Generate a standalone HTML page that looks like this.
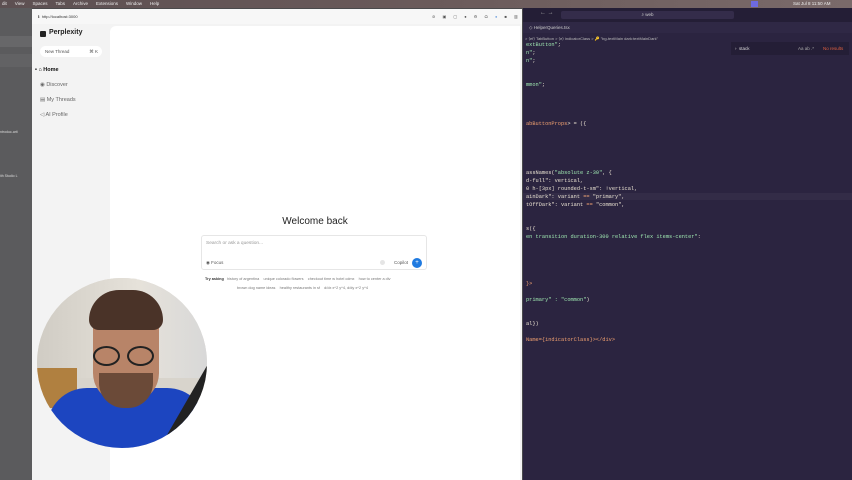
<!DOCTYPE html>
<html><head><meta charset="utf-8"><style>
*{margin:0;padding:0;box-sizing:border-box}
body{width:852px;height:480px;overflow:hidden;position:relative;font-family:"Liberation Sans",sans-serif;background:#4a4a4c}
.abs{position:absolute}
.menubar{left:0;top:0;width:852px;height:8px;background:linear-gradient(90deg,#5d5052,#6a5a5a 50%,#7a6a6a);color:#eee;font-size:4.5px;line-height:8px}
.menubar span{margin-right:8px}
.leftdark{left:0;top:8px;width:32px;height:472px;background:#5b5b5d}
.browser{left:32px;top:9px;width:490px;height:471px;background:#f3f3f3}
.urlbar{left:32px;top:9px;width:490px;height:15px;background:#f7f7f7;font-size:4px;color:#333;line-height:15px;padding-left:6px}
.main{left:110px;top:26px;width:410px;height:454px;background:#fff;border-radius:6px 0 0 0}
.side{font-size:5.5px;color:#666}
.editor{left:523px;top:8px;width:329px;height:472px;background:#2b2440}
.code{font-family:"Liberation Mono",monospace;font-size:5.3px;color:#e8e0d0;white-space:pre;left:526px}
.g{color:#9ee6b0}.o{color:#f0a070}
</style></head><body>
<div class="abs menubar"><span style="margin-left:2px">dit</span><span>View</span><span>Spaces</span><span>Tabs</span><span>Archive</span><span>Extensions</span><span>Window</span><span>Help</span>
<span style="position:absolute;left:793px">Sat Jul 8 11:50 AM</span>
<span style="position:absolute;left:751px;top:1px;width:7px;height:6px;background:#6d6ae0"></span></div>
<div class="abs leftdark"></div>
<div class="abs" style="left:0;top:36px;width:32px;height:11px;background:#676769"></div>
<div class="abs" style="left:0;top:54px;width:32px;height:13px;background:#626264"></div>
<div class="abs" style="left:0;top:130px;font-size:3.5px;color:#ddd">ntroduc-arti</div>
<div class="abs" style="left:0;top:174px;font-size:3.5px;color:#ddd">ith Studio L</div>
<div class="abs browser"></div>
<div class="abs urlbar">ℹ&nbsp; http://localhost:3000<span style="position:absolute;left:400px;color:#555;letter-spacing:3px">⊘ ▣ ▢ ● ⚙ ⬭ <span style="color:#7aa7e0">●</span> ■ ▥</span></div>
<div class="abs" style="left:40px;top:31px;width:6px;height:6px;background:#222;border-radius:1px"></div>
<div class="abs" style="left:49px;top:29px;font-size:7px;color:#222;font-weight:bold">Perplexity</div>
<div class="abs" style="left:40px;top:46px;width:62px;height:11px;background:#fff;border-radius:6px;font-size:4.5px;color:#555;line-height:11px;padding-left:5px">New Thread<span style="position:absolute;right:4px">⌘ K</span></div>
<div class="abs side" style="left:35px;top:67px;color:#111;font-weight:bold">• ⌂ Home</div>
<div class="abs side" style="left:40px;top:82px">◉ Discover</div>
<div class="abs side" style="left:40px;top:97px">▤ My Threads</div>
<div class="abs side" style="left:40px;top:112px">◁ AI Profile</div>
<div class="abs main"></div>
<div class="abs" style="left:110px;top:216px;width:410px;text-align:center;font-size:10px;color:#222">Welcome back</div>
<div class="abs" style="left:201px;top:235px;width:226px;height:35px;border:1px solid #e6e6e6;border-radius:3px;background:#fff"></div>
<div class="abs" style="left:206px;top:241px;font-size:4.8px;color:#999">Search or ask a question...</div>
<div class="abs" style="left:206px;top:260px;font-size:4.5px;color:#555">◉ Focus</div>
<div class="abs" style="left:380px;top:260px;width:5px;height:5px;border-radius:50%;background:#e5e5e5"></div>
<div class="abs" style="left:394px;top:260px;font-size:4.5px;color:#555">Copilot</div>
<div class="abs" style="left:412px;top:258px;width:10px;height:10px;border-radius:50%;background:#1f7ae0;color:#fff;font-size:6px;text-align:center;line-height:10px">+</div>
<div class="abs" style="left:205px;top:277px;font-size:3.8px;color:#777;white-space:nowrap"><b style="color:#333">Try asking</b>&nbsp;&nbsp; history of argentina &nbsp;&nbsp; unique colorado flowers &nbsp;&nbsp; checkout time w hotel cdmx &nbsp;&nbsp; how to center a div</div>
<div class="abs" style="left:237px;top:286px;font-size:3.8px;color:#777;white-space:nowrap">brown dog name ideas &nbsp;&nbsp; healthy restaurants in sf &nbsp;&nbsp; d/dx x^2 y^4, d/dy x^2 y^4</div>
<div class="abs" style="left:37px;top:278px;width:170px;height:170px;border-radius:50%;overflow:hidden;background:#d8d4cc">
 <div class="abs" style="left:0;top:0;width:170px;height:100px;background:linear-gradient(90deg,#d0ccc4,#e6e2da 60%,#d8d8d8)"></div>
 <div class="abs" style="left:0;top:90px;width:40px;height:40px;background:#b08040"></div>
 <div class="abs" style="left:10px;top:110px;width:160px;height:80px;background:#1c45c0;border-radius:40px 40px 0 0"></div>
 <div class="abs" style="left:56px;top:20px;width:66px;height:105px;background:#b88468;border-radius:30px"></div>
 <div class="abs" style="left:52px;top:12px;width:74px;height:40px;background:#4a3328;border-radius:30px 30px 10px 10px"></div>
 <div class="abs" style="left:62px;top:95px;width:54px;height:35px;background:#6b4a38;border-radius:0 0 25px 25px"></div>
 <div class="abs" style="left:56px;top:68px;width:27px;height:20px;border:2px solid #222;border-radius:50%"></div>
 <div class="abs" style="left:90px;top:68px;width:27px;height:20px;border:2px solid #222;border-radius:50%"></div>
 <div class="abs" style="left:150px;top:80px;width:20px;height:90px;background:#222;transform:rotate(30deg)"></div>
</div>
<div class="abs editor"></div>
<div class="abs" style="left:523px;top:8px;width:329px;height:14px;background:#241e36"></div>
<div class="abs" style="left:561px;top:11px;width:173px;height:8px;background:#342c4a;border-radius:2px;font-size:4.5px;color:#ccc;text-align:center;line-height:8px">⌕ web</div>
<div class="abs" style="left:540px;top:10px;font-size:6px;color:#aaa">← →</div>
<div class="abs" style="left:523px;top:22px;width:329px;height:11px;background:#2f2845;font-size:4.5px;color:#ccc;line-height:11px;padding-left:6px">◇ HelperQueries.tsx</div>
<div class="abs" style="left:525px;top:36px;font-size:4px;color:#bbb;white-space:nowrap">&gt; ⟨ef⟩ TabButton &gt; ⟨e⟩ indicatorClass &gt; 🔑 "bg-textMain dark:textMainDark"</div>
<div class="abs" style="left:731px;top:42px;width:118px;height:13px;background:#241e36;font-size:4.5px;color:#ddd;line-height:13px;padding-left:4px">› &nbsp;stack<span style="position:absolute;left:67px;color:#aaa">Aa ab .*</span><span style="position:absolute;left:92px;color:#e06040">No results</span></div>
<div class="abs code" style="top:42px;line-height:7.9px"><span class="g">extButton"</span>;
<span class="g">n"</span>;
<span class="g">n"</span>;


<span class="g">mmon"</span>;




<span class="o">abButtonProps</span>&gt; = ({</div>
<div class="abs code" style="top:169px;line-height:8px">assNames(<span class="g">"absolute z-30"</span>, {
d-full": vertical,
0 h-[3px] rounded-t-sm": !vertical,
ainDark": variant <span class="o">==</span> "primary",
tOffDark": variant <span class="o">==</span> "common",


s({
<span class="g">en transition duration-300 relative flex items-center"</span>:</div>
<div class="abs" style="left:523px;top:193px;width:329px;height:7px;background:rgba(255,255,255,0.04)"></div>
<div class="abs code" style="top:280px;line-height:8px"><span class="o">}&gt;</span>

<span class="g">primary" : "common"</span>)


al})

<span class="o">Name={indicatorClass}&gt;&lt;/div&gt;</span></div>
</body></html>
